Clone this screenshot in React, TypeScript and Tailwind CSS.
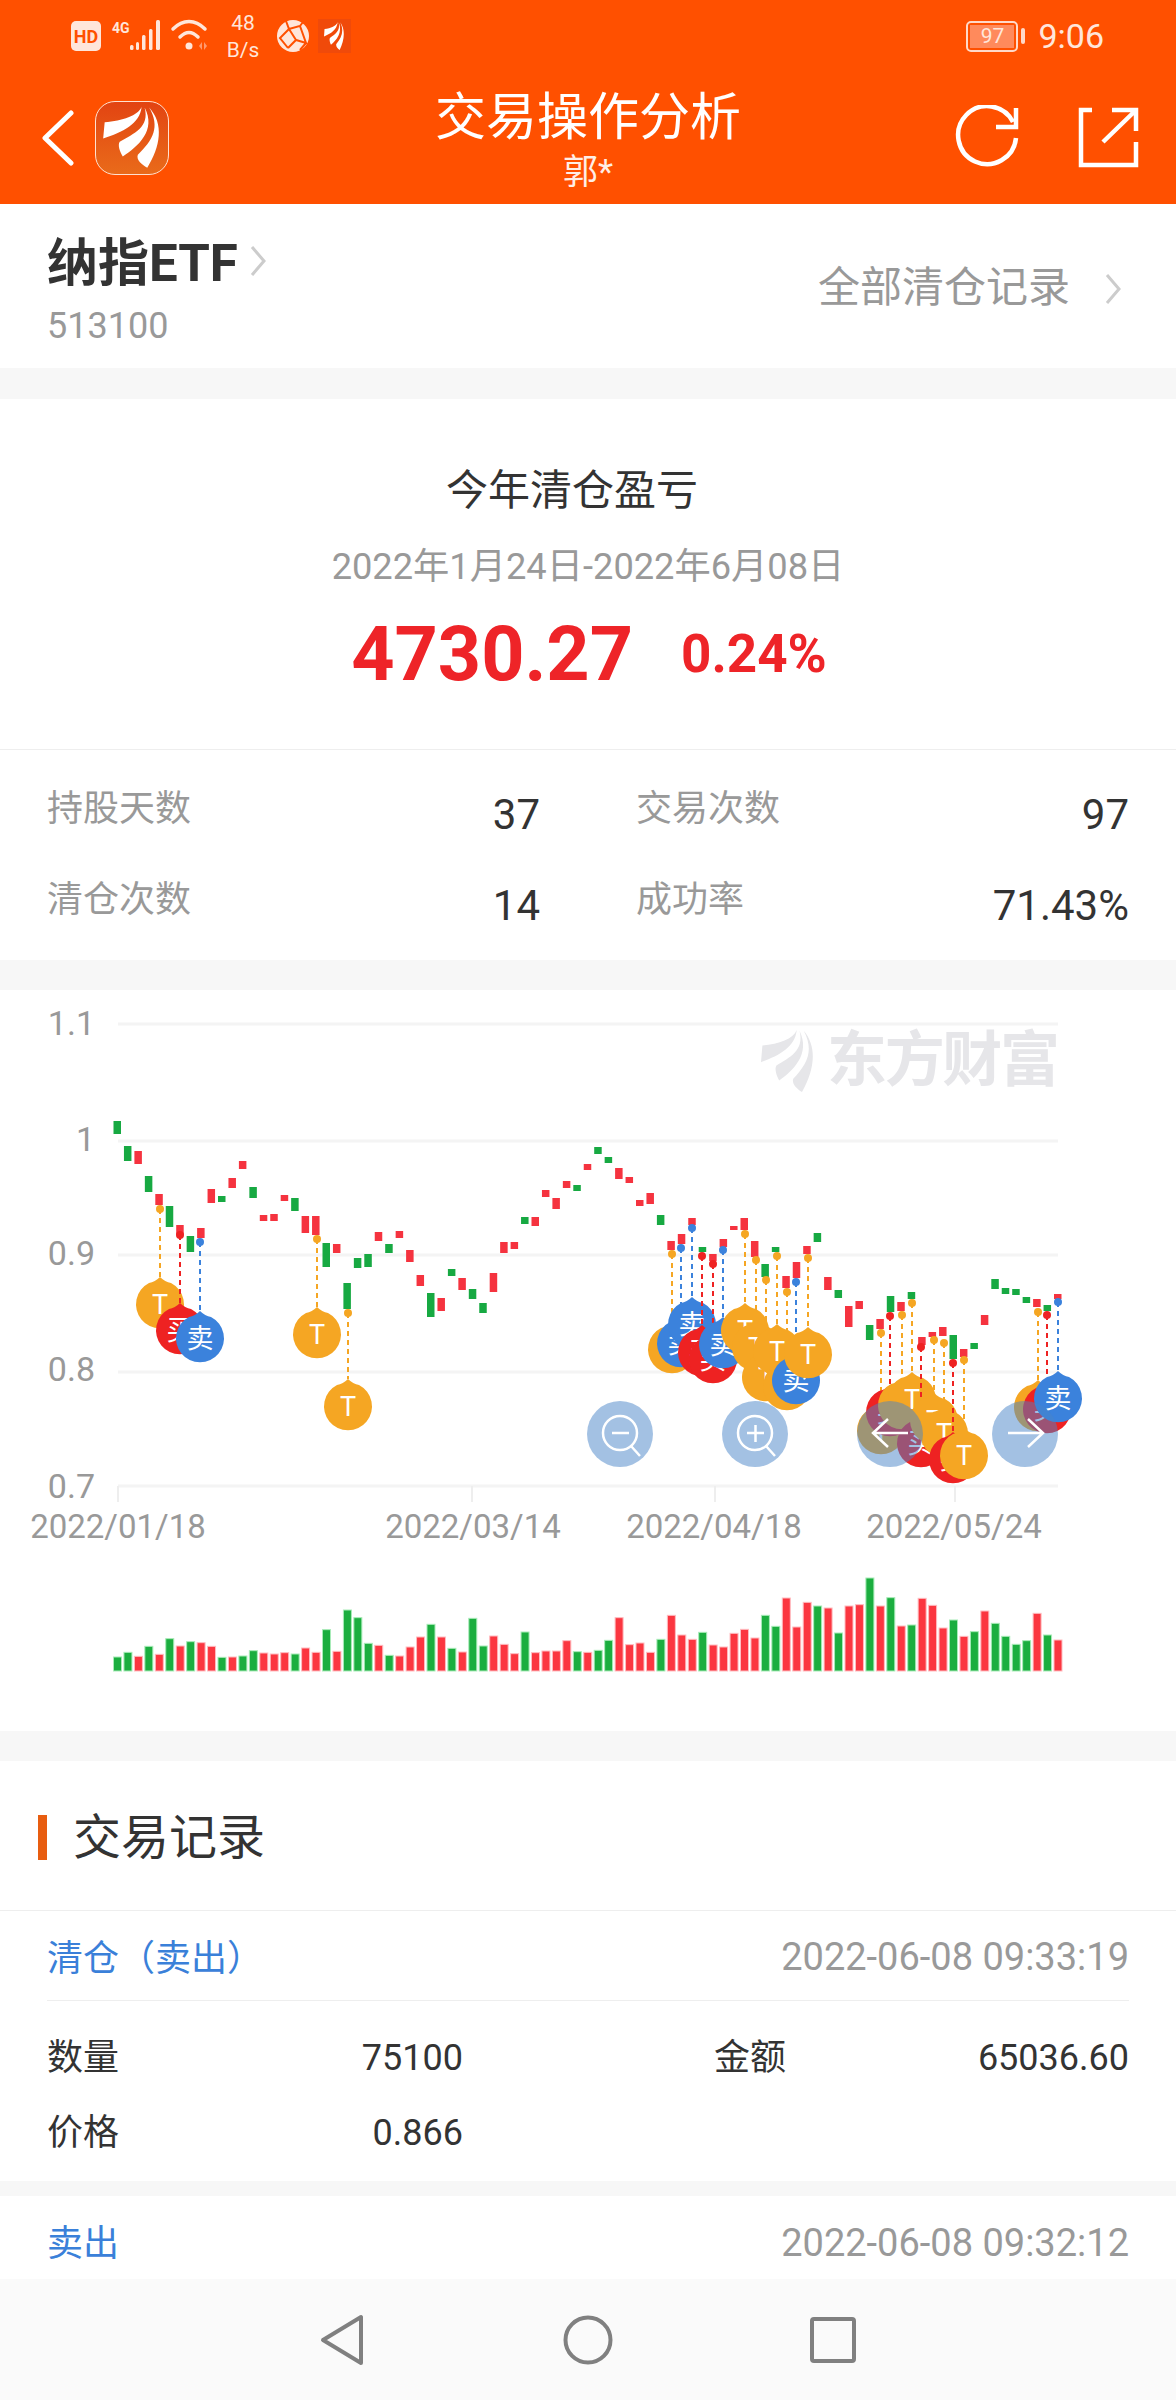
import React from 'react';

const RED = '#f5333f';
const GREEN = '#17a942';
const feather = [
  'M370 318C360 345 320 360 272 365L268 415C320 395 365 370 370 318Z',
  'M378 320C392 380 350 400 312 425C306 435 312 455 320 470C360 440 410 390 378 320Z',
  'M390 320C430 370 420 440 385 505C370 495 355 480 360 465C400 420 420 380 390 320Z',
];

// i-th candle: [top, bottom, r/g]
const candles: [number, number, string][] = [
  [1121, 1134, 'g'], [1146, 1161, 'g'], [1151, 1164, 'r'], [1176, 1192, 'g'], [1194, 1205, 'r'], [1206, 1227, 'g'],
  [1225, 1235, 'r'], [1236, 1252, 'g'], [1228, 1238, 'r'], [1189, 1203, 'r'], [1196, 1202, 'g'], [1178, 1188, 'r'],
  [1161, 1169, 'r'], [1187, 1198, 'g'], [1215, 1221, 'r'], [1214, 1221, 'r'], [1195, 1201, 'r'], [1198, 1211, 'g'],
  [1216, 1233, 'r'], [1216, 1235, 'r'], [1243, 1267, 'g'], [1244, 1253, 'r'], [1283, 1309, 'g'], [1258, 1268, 'g'],
  [1254, 1267, 'g'], [1232, 1241, 'r'], [1244, 1253, 'g'], [1231, 1238, 'r'], [1250, 1262, 'r'], [1275, 1286, 'r'],
  [1293, 1317, 'g'], [1298, 1311, 'r'], [1269, 1276, 'g'], [1278, 1290, 'r'], [1289, 1299, 'g'], [1303, 1313, 'g'],
  [1273, 1292, 'r'], [1242, 1253, 'r'], [1242, 1249, 'r'], [1217, 1224, 'g'], [1217, 1226, 'r'], [1190, 1197, 'r'],
  [1198, 1209, 'r'], [1181, 1188, 'r'], [1185, 1191, 'g'], [1164, 1170, 'r'], [1147, 1154, 'g'], [1157, 1163, 'g'],
  [1168, 1179, 'r'], [1177, 1183, 'r'], [1200, 1206, 'r'], [1193, 1204, 'r'], [1215, 1225, 'g'], [1241, 1250, 'r'],
  [1234, 1244, 'r'], [1218, 1225, 'r'], [1247, 1252, 'g'], [1254, 1261, 'r'], [1239, 1247, 'r'], [1226, 1230, 'r'],
  [1218, 1230, 'r'], [1241, 1257, 'r'], [1264, 1277, 'g'], [1247, 1252, 'g'], [1276, 1288, 'r'], [1262, 1278, 'r'],
  [1246, 1254, 'r'], [1233, 1242, 'g'], [1277, 1290, 'r'], [1290, 1298, 'g'], [1306, 1327, 'r'], [1301, 1309, 'r'],
  [1325, 1340, 'g'], [1319, 1329, 'r'], [1296, 1312, 'g'], [1302, 1311, 'r'], [1292, 1299, 'g'], [1337, 1345, 'r'],
  [1332, 1337, 'r'], [1327, 1336, 'r'], [1335, 1359, 'g'], [1349, 1357, 'r'], [1343, 1349, 'g'], [1315, 1325, 'r'],
  [1279, 1289, 'g'], [1288, 1294, 'g'], [1289, 1295, 'g'], [1297, 1303, 'g'], [1299, 1307, 'r'], [1305, 1311, 'g'],
  [1294, 1299, 'r'],
];

// volume heights, measured at 3x
const volumes: [number, string][] = [
  [42, 'g'], [56, 'g'], [44, 'r'], [74, 'g'], [50, 'r'], [97, 'g'], [75, 'r'], [88, 'g'], [85, 'r'], [74, 'r'],
  [41, 'g'], [42, 'r'], [45, 'g'], [61, 'g'], [54, 'r'], [51, 'r'], [55, 'r'], [51, 'g'], [69, 'r'], [56, 'r'],
  [124, 'g'], [59, 'r'], [183, 'g'], [160, 'g'], [83, 'g'], [77, 'r'], [47, 'g'], [45, 'r'], [72, 'r'], [102, 'r'],
  [140, 'g'], [102, 'r'], [68, 'g'], [57, 'r'], [158, 'g'], [75, 'g'], [105, 'r'], [80, 'r'], [52, 'r'], [117, 'g'],
  [55, 'r'], [60, 'r'], [60, 'r'], [91, 'r'], [58, 'g'], [56, 'r'], [62, 'g'], [92, 'g'], [160, 'r'], [79, 'r'],
  [84, 'r'], [56, 'r'], [95, 'g'], [167, 'r'], [108, 'r'], [95, 'r'], [116, 'g'], [78, 'r'], [72, 'r'], [113, 'r'],
  [125, 'r'], [99, 'r'], [167, 'g'], [134, 'g'], [219, 'r'], [132, 'r'], [206, 'r'], [195, 'g'], [189, 'r'], [114, 'g'],
  [195, 'r'], [199, 'r'], [279, 'g'], [195, 'r'], [220, 'g'], [135, 'r'], [138, 'g'], [218, 'r'], [197, 'r'], [129, 'r'],
  [153, 'g'], [104, 'r'], [118, 'g'], [180, 'r'], [143, 'g'], [104, 'g'], [80, 'g'], [91, 'g'], [173, 'r'], [108, 'g'],
  [93, 'r'],
];

// trade markers in x order: kind, x, dot y, drop tip y
const markers: [string, number, number, number][] = [
  ['T', 160, 1209, 1277], ['R', 180, 1235, 1303], ['B', 200, 1242, 1311], ['T', 317, 1239, 1307], ['T', 348, 1313, 1379],
  ['T', 672, 1254, 1322], ['B', 681, 1248, 1316], ['B', 692, 1228, 1297], ['R', 702, 1256, 1325], ['R', 713, 1264, 1332],
  ['B', 723, 1250, 1317], ['T', 745, 1234, 1303], ['T', 756, 1260, 1320], ['T', 766, 1280, 1350], ['T', 777, 1256, 1324],
  ['T', 787, 1292, 1359], ['B', 796, 1282, 1353], ['T', 808, 1258, 1327], ['T', 881, 1333, 1403], ['R', 890, 1316, 1385],
  ['T', 902, 1315, 1378], ['T', 912, 1303, 1372], ['R', 921, 1347, 1416], ['T', 934, 1340, 1393], ['T', 944, 1343, 1406],
  ['R', 953, 1363, 1432], ['T', 964, 1360, 1428], ['T', 1038, 1312, 1380], ['R', 1047, 1315, 1382], ['B', 1058, 1302, 1371],
];
const markerColor: Record<string, string> = { T: '#f5a623', R: '#ee2222', B: '#3b82dc' };
const markerText: Record<string, string> = { T: 'T', R: '买', B: '卖' };

const dropPath = (x: number, t: number) =>
  `M${x} ${t}Q${x + 5} ${t + 5} ${x + 11} ${t + 6}A24 24 0 1 1 ${x - 11} ${t + 6}Q${x - 5} ${t + 5} ${x} ${t}Z`;

const TradeChart = () => (
  <svg viewBox="0 990 1176 741" className="block w-[1176px] h-[741px] bg-white">
    {[1024, 1141, 1255, 1372, 1486].map((y) => (
      <rect key={y} x="118" y={y - 1.5} width="940" height="3" fill="#f4f4f4" />
    ))}
    {[118, 472, 715, 955].map((x) => (
      <rect key={x} x={x - 1} y="1486" width="2" height="16" fill="#eeeeee" />
    ))}
    {[['1.1', 1023], ['1', 1139], ['0.9', 1253], ['0.8', 1369], ['0.7', 1486]].map(([t, y]) => (
      <text key={t} x="95" y={Number(y) + 12} textAnchor="end" className="text-[34px] fill-[#999999]">{t}</text>
    ))}
    {[['2022/01/18', 118], ['2022/03/14', 473], ['2022/04/18', 714], ['2022/05/24', 954]].map(([t, x]) => (
      <text key={t} x={x} y="1538" textAnchor="middle" className="text-[33px] fill-[#999999]">{t}</text>
    ))}

    {/* watermark */}
    <svg x="761" y="1030" width="55" height="62" viewBox="268 318 157 187" preserveAspectRatio="none">
      {feather.map((d) => <path key={d} d={d} fill="#e6e6e9" />)}
    </svg>
    <text x="827" y="1081" textLength="233" className="text-[60px] font-bold fill-[#e6e6e9]">东方财富</text>

    {candles.map(([top, bottom, c], i) => (
      <rect key={i} x={113.5 + i * 10.45} y={top} width="7.5" height={bottom - top} fill={c === 'g' ? GREEN : RED} />
    ))}
    {volumes.map(([h, c], i) => (
      <rect
        key={i}
        x={113.5 + i * 10.45}
        y={1671 - h / 3}
        width="8"
        height={h / 3}
        fill={c === 'g' ? '#1bae3f' : '#fb3640'}
        stroke={c === 'g' ? '#a8ebb8' : '#ffbcc0'}
        strokeWidth="1"
      />
    ))}

    {markers.map(([k, x, dot, tip], i) => (
      <g key={i}>
        <line x1={x} y1={dot} x2={x} y2={tip} stroke={markerColor[k]} strokeWidth="2" strokeDasharray="5 4" />
        <circle cx={x} cy={dot} r="4" fill={markerColor[k]} />
        <path d={dropPath(x, tip)} fill={markerColor[k]} />
        <text x={x} y={tip + 37} textAnchor="middle" className="text-[27px] fill-white">{markerText[k]}</text>
      </g>
    ))}

    {/* chart controls */}
    {[620, 755, 890, 1025].map((x) => (
      <circle key={x} cx={x} cy="1434" r="33" fill="#4783c7" fillOpacity="0.5" />
    ))}
    <g fill="none" stroke="#ffffff" strokeWidth="2.5">
      <circle cx="620" cy="1433" r="17" />
      <path d="M612 1433H629M631 1446L640 1456" />
      <circle cx="755" cy="1433" r="17" />
      <path d="M747 1433H764M755.500 1425V1442M766 1446L775 1456" />
      <path d="M873 1433H908M888 1419L873 1433L888 1447" />
      <path d="M1008 1433H1043M1028 1419L1043 1433L1028 1447" />
    </g>
  </svg>
);

const StatusBar = () => (
  <div className="h-[72px] flex items-center pl-[71px] pr-[72px] text-[#ffe6da]">
    <span className="w-[30px] h-[30px] rounded-[5px] bg-[#ffe6da] text-[#ff5000] text-[18px] font-bold flex items-center justify-center">HD</span>
    <svg width="50" height="34" viewBox="111 20 50 34" className="ml-[10px]">
      <text x="112" y="34" className="text-[14px] font-bold fill-[#ffe6da]">4G</text>
      <rect x="130" y="46" width="3.500" height="5" rx="1.500" fill="#ffe6da" />
      <rect x="136" y="43" width="3" height="8" rx="1.500" fill="#ffe6da" />
      <rect x="142" y="36" width="3.500" height="15" rx="1.500" fill="#ffe6da" />
      <rect x="149" y="30" width="3.500" height="21" rx="1.500" fill="#ffe6da" />
      <rect x="156" y="21" width="4" height="30" rx="1.500" fill="#ffe6da" />
    </svg>
    <svg width="38" height="34" viewBox="170 20 38 34" className="ml-[9px]">
      <path d="M173 30C183 20 195 20 205 30M180 38C186 32 192 32 198 38" fill="none" stroke="#ffe6da" strokeWidth="3.500" strokeLinecap="round" />
      <circle cx="189" cy="47" r="3.500" fill="#ffe6da" />
      <path d="M199 47L202 43V51ZM204 43L207 47L204 51Z" fill="#ff9a70" />
    </svg>
    <div className="ml-[18px] w-[34px] flex flex-col items-center text-[21px] leading-[27px] pt-[2px]">
      <span>48</span>
      <span>B/s</span>
    </div>
    <svg width="34" height="34" viewBox="0 0 34 34" className="ml-[16px]">
      <circle cx="17" cy="17" r="16" fill="#ffe6da" />
      <path d="M10 2L13 10L24 7L27 3M13 10L4 19L12 29M24 7L30 24L20 21L12 29M13 10L20 21M30 24L24 31" fill="none" stroke="#ff5000" strokeWidth="2" />
    </svg>
    <div className="ml-[8px] w-[33px] h-[34px] bg-[#f04a0a] flex items-center justify-center">
      <svg width="21" height="28" viewBox="268 318 157 187" preserveAspectRatio="none">
        {feather.map((d) => <path key={d} d={d} fill="#ffffff" />)}
      </svg>
    </div>
    <div className="ml-auto flex items-center">
      <div className="w-[52px] h-[31px] rounded-[5px] border-2 border-[#ffd9c8] p-[2px]">
        <div className="w-full h-full bg-[#ff8a5c] text-[#ffe6da] text-[21px] leading-[23px] text-center">97</div>
      </div>
      <div className="ml-[3px] w-[4px] h-[16px] rounded-[2px] bg-[#ffd9c8]" />
      <span className="ml-[13px] text-[34px] leading-[40px]">9:06</span>
    </div>
  </div>
);

const NavBar = () => (
  <div className="h-[132px] grid grid-cols-[1fr_auto_1fr] items-center text-white">
    <div className="flex items-center pl-[41px]">
      <svg width="34" height="56" viewBox="0 0 34 56">
        <path d="M30 3L4 28L30 53" fill="none" stroke="#ffffff" strokeWidth="5" strokeLinecap="round" strokeLinejoin="round" />
      </svg>
      <div className="ml-[20px] w-[74px] h-[74px] rounded-[20px] border border-[#ffe1d0] bg-gradient-to-b from-[#e24312] to-[#e96a1a] overflow-hidden">
        <svg width="72" height="72" viewBox="249 303 191 221" preserveAspectRatio="none" className="block">
          {feather.map((d) => <path key={d} d={d} fill="#ffffff" />)}
        </svg>
      </div>
    </div>
    <div className="flex flex-col items-center pt-[4px]">
      <span className="text-[51px] leading-[60px]">交易操作分析</span>
      <span className="mt-[6px] text-[35px] leading-[38px] text-[#ffeee6]">郭*</span>
    </div>
    <div className="flex items-center justify-end pr-[37px]">
      <svg width="66" height="66" viewBox="954 105 66 66">
        <path d="M1013 122A29 29 0 1 0 1016 138M996 127H1016V108" fill="none" stroke="#ffffff" strokeWidth="4.500" />
      </svg>
      <svg width="62" height="64" viewBox="1077 106 62 64" className="ml-[57px]">
        <path d="M1092 110H1081V165H1136V142M1103 142L1135 111M1112 110H1136V131" fill="none" stroke="#ffffff" strokeWidth="4.500" />
      </svg>
    </div>
  </div>
);

const Chevron = ({ h = 32 }: { h?: number }) => (
  <svg width="18" height={h} viewBox="0 0 18 32">
    <path d="M3 2L15 16L3 30" fill="none" stroke="#cccccc" strokeWidth="3" />
  </svg>
);

const Stat = ({ label, value }: { label: string; value: string }) => (
  <div className="flex items-center justify-between h-[60px]">
    <span className="text-[36px] text-[#999999] pb-[2px]">{label}</span>
    <span className="text-[42px] text-[#333333] pt-[8px]">{value}</span>
  </div>
);

const App = () => {
  return (
    <div className="w-[1176px] h-[2400px] overflow-hidden bg-[#f7f7f7] [font-family:Roboto,'Noto_Sans_CJK_SC',sans-serif]">
      <div className="bg-[#ff5000]">
        <StatusBar />
        <NavBar />
      </div>

      {/* Stock */}
      <div className="h-[164px] bg-white flex justify-between px-[47px]">
        <div className="pt-[32px]">
          <div className="flex items-center">
            <span className="text-[51px] leading-[56px] font-bold text-[#333333]">纳指ETF</span>
            <span className="ml-[11px] pb-[6px]"><Chevron /></span>
          </div>
          <div className="mt-[13px] text-[36px] leading-[42px] text-[#999999]">513100</div>
        </div>
        <div className="pt-[58px] flex items-start">
          <span className="text-[42px] leading-[52px] text-[#999999]">全部清仓记录</span>
          <span className="ml-[34px] mt-[9px] mr-[7px]"><Chevron h={36} /></span>
        </div>
      </div>

      {/* Summary */}
      <div className="mt-[31px] bg-white">
        <div className="h-[351px] border-b border-[#eeeeee] flex flex-col items-center pt-[67px]">
          <div className="text-[42px] leading-[50px] text-[#333333] pr-[32px]">今年清仓盈亏</div>
          <div className="mt-[29px] text-[36.250px] leading-[44px] text-[#999999]">2022年1月24日-2022年6月08日</div>
          <div className="mt-[21px] pl-[2px] flex items-center gap-x-[48px] text-[#ee2428] font-bold">
            <span className="text-[75.500px] leading-[88px]">4730.27</span>
            <span className="text-[53px] leading-[88px]">0.24%</span>
          </div>
        </div>
        <div className="h-[210px] pt-[30px] px-[47px] grid grid-cols-2 gap-x-[96px] gap-y-[31px] content-start">
          <Stat label="持股天数" value="37" />
          <Stat label="交易次数" value="97" />
          <Stat label="清仓次数" value="14" />
          <Stat label="成功率" value="71.43%" />
        </div>
      </div>

      <div className="mt-[30px]">
        <TradeChart />
      </div>

      {/* Trade records */}
      <div className="mt-[30px] bg-white">
        <div className="h-[150px] border-b border-[#eeeeee] flex items-center pl-[38px] pt-[4px]">
          <div className="w-[9px] h-[45px] bg-[#e85d10]" />
          <span className="ml-[26px] text-[48px] leading-[56px] text-[#333333]">交易记录</span>
        </div>
        <div className="mx-[47px] h-[90px] border-b border-[#eeeeee] flex items-center justify-between">
          <span className="text-[36px] text-[#3a80d9] pt-[7px]">清仓（卖出）</span>
          <span className="text-[38px] text-[#999999] pt-[4px]">2022-06-08 09:33:19</span>
        </div>
        <div className="h-[180px] pt-[19px] px-[47px] grid grid-cols-[416px_415px] justify-between auto-rows-[75px] text-[36px] text-[#333333]">
          <div className="flex items-center justify-between"><span>数量</span><span>75100</span></div>
          <div className="flex items-center justify-between"><span>金额</span><span>65036.60</span></div>
          <div className="flex items-center justify-between"><span>价格</span><span>0.866</span></div>
        </div>
      </div>
      <div className="mt-[15px] h-[83px] bg-white px-[47px] pt-[12px] flex items-center justify-between">
        <span className="text-[36px] text-[#3a80d9]">卖出</span>
        <span className="text-[38px] text-[#999999]">2022-06-08 09:32:12</span>
      </div>

      {/* Android nav */}
      <div className="h-[121px] bg-[#fafafa] flex items-center justify-center">
        <svg width="46" height="52" viewBox="0 0 46 52">
          <path d="M42 3V49L4 26Z" fill="none" stroke="#808080" strokeWidth="4" strokeLinejoin="round" />
        </svg>
        <svg width="52" height="52" viewBox="0 0 52 52" className="ml-[197px]">
          <circle cx="26" cy="26" r="22.500" fill="none" stroke="#808080" strokeWidth="4" />
        </svg>
        <svg width="48" height="48" viewBox="0 0 48 48" className="ml-[195px]">
          <rect x="3" y="3" width="42" height="42" rx="2" fill="none" stroke="#808080" strokeWidth="4" />
        </svg>
      </div>
    </div>
  );
};

export default App;
